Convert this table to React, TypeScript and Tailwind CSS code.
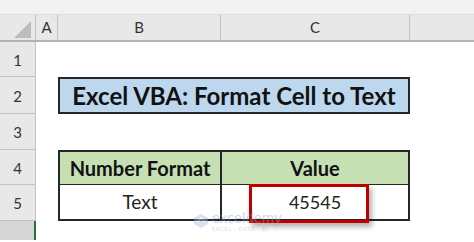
import React from "react";

const font = { fontFamily: "Lato, 'Open Sans', 'Liberation Sans', sans-serif" };

export default function App() {
  const rowHeights = [35, 37, 36, 35, 36];
  return (
    <div className="w-[474px] h-[242px] overflow-hidden bg-white relative" style={font}>
      <div className="h-[15px] bg-[#f2f2f2] border-b border-[#dcdcdc]" />
      <div className="grid grid-cols-[36px_22px_163px_189px_1fr] h-[27px] bg-[#e8e8e8] border-b-2 border-[#b3b3b3] text-[15px] text-[#333]">
        <div className="relative border-r border-[#c4c4c4]">
          <div className="absolute right-[4px] bottom-[2px] w-0 h-0 border-l-[17px] border-l-transparent border-b-[17px] border-b-[#bdbdbd]" />
        </div>
        <div className="flex items-center justify-center border-r border-[#c4c4c4]">A</div>
        <div className="flex items-center justify-center border-r border-[#c4c4c4]">B</div>
        <div className="flex items-center justify-center border-r border-[#c4c4c4]">C</div>
        <div />
      </div>
      <div className="grid grid-cols-[36px_22px_163px_189px_1fr] grid-rows-[35px_37px_36px_35px_36px_1fr] h-[198px]">
        {rowHeights.map((_, i) => (
          <div
            key={i}
            className="col-start-1 flex items-center justify-center pt-[2px] bg-[#e8e8e8] border-b border-r border-[#c4c4c4] text-[15px] text-[#333]"
            style={{ gridRowStart: i + 1 }}
          >
            {i + 1}
          </div>
        ))}
        <div className="col-start-1 row-start-6 bg-[#d6d6d6] border-r-2 border-[#217346]" />

        <div className="col-start-3 col-span-2 row-start-2 bg-[#bdd7ee] border-2 border-[#262626] flex items-center justify-center text-[24px] font-bold text-[#111]">
          Excel VBA: Format Cell to Text
        </div>

        <div className="col-start-3 row-start-4 bg-[#c6e0b4] border-2 border-r border-b border-[#262626] flex items-center justify-center text-[20px] font-bold text-[#111]">
          Number Format
        </div>
        <div className="col-start-4 row-start-4 bg-[#c6e0b4] border-2 border-l border-b border-[#262626] flex items-center justify-center text-[20px] font-bold text-[#111]">
          Value
        </div>
        <div className="col-start-3 row-start-5 bg-white border-2 border-r border-t-0 border-[#262626] flex items-center justify-center text-[19px] text-[#222]">
          Text
        </div>
        <div className="col-start-4 row-start-5 bg-white border-2 border-l border-t-0 border-[#262626] flex items-center justify-center text-[18px] text-[#222]">
          45545
        </div>
      </div>

      <div className="absolute left-[249px] top-[184px] w-[120px] h-[39px] border-[3px] border-[#c00000] shadow-[3px_4px_5px_rgba(0,0,0,0.3)]" />

      <div className="absolute left-[193px] top-[210px] flex items-center gap-[3px] opacity-40">
        <svg width="16" height="16" viewBox="0 0 16 16">
          <path d="M8 1 L15 5 L15 11 L8 15 L1 11 L1 5 Z" fill="#9fb6d8" />
          <path d="M4 9 L8 5 L12 9" stroke="white" strokeWidth="1.5" fill="none" />
        </svg>
        <div className="flex flex-col">
          <span className="text-[15px] leading-[15px] text-[#8aa3c8]">exceldemy</span>
          <span className="text-[5px] leading-[6px] mt-[1px] tracking-[1px] text-[#8aa3c8]">EXCEL · DATA · BI</span>
        </div>
      </div>
    </div>
  );
}
